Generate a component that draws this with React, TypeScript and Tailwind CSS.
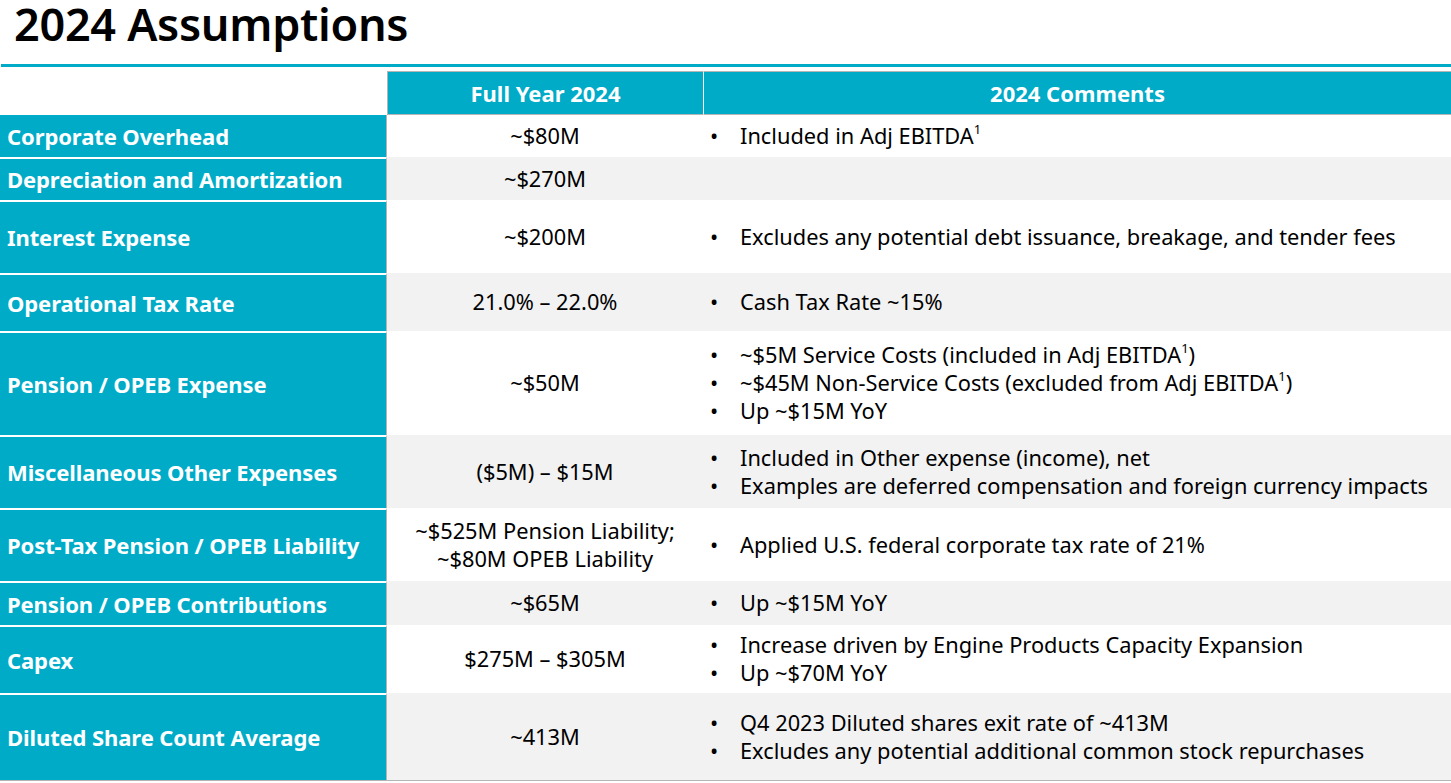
import React from "react";

type Row = {
  label: string;
  value: React.ReactNode;
  bullets: React.ReactNode[];
  h: string;
  gray: boolean;
};

const Sup = () => <sup className="text-[13px] relative top-[-2px] align-super leading-none">1</sup>;

const rows: Row[] = [
  { label: "Corporate Overhead", value: "~$80M", bullets: [<>Included in Adj EBITDA<Sup /></>], h: "h-[42px]", gray: false },
  { label: "Depreciation and Amortization", value: "~$270M", bullets: [], h: "h-[43px]", gray: true },
  { label: "Interest Expense", value: "~$200M", bullets: ["Excludes any potential debt issuance, breakage, and tender fees"], h: "h-[73px]", gray: false },
  { label: "Operational Tax Rate", value: "21.0% – 22.0%", bullets: ["Cash Tax Rate ~15%"], h: "h-[58px]", gray: true },
  {
    label: "Pension / OPEB Expense",
    value: "~$50M",
    bullets: [
      <>~$5M Service Costs (included in Adj EBITDA<Sup />)</>,
      <>~$45M Non-Service Costs (excluded from Adj EBITDA<Sup />)</>,
      "Up ~$15M YoY",
    ],
    h: "h-[104px]",
    gray: false,
  },
  {
    label: "Miscellaneous Other Expenses",
    value: "($5M) – $15M",
    bullets: ["Included in Other expense (income), net", "Examples are deferred compensation and foreign currency impacts"],
    h: "h-[73px]",
    gray: true,
  },
  {
    label: "Post-Tax Pension / OPEB Liability",
    value: (
      <>
        ~$525M Pension Liability;
        <br />
        ~$80M OPEB Liability
      </>
    ),
    bullets: ["Applied U.S. federal corporate tax rate of 21%"],
    h: "h-[73px]",
    gray: false,
  },
  { label: "Pension / OPEB Contributions", value: "~$65M", bullets: ["Up ~$15M YoY"], h: "h-[44px]", gray: true },
  {
    label: "Capex",
    value: "$275M – $305M",
    bullets: ["Increase driven by Engine Products Capacity Expansion", "Up ~$70M YoY"],
    h: "h-[68px]",
    gray: false,
  },
  {
    label: "Diluted Share Count Average",
    value: "~413M",
    bullets: ["Q4 2023 Diluted shares exit rate of ~413M", "Excludes any potential additional common stock repurchases"],
    h: "h-[88px]",
    gray: true,
  },
];

export default function App() {
  return (
    <div
      className="w-[1451px] h-[783px] bg-white text-black"
      style={{ fontFamily: '"Noto Sans", "Open Sans", sans-serif' }}
    >
      <div className="h-[64px] pl-[14px]">
        <h1 className="text-[45px] font-semibold leading-[47px] tracking-[-0.3px]">2024 Assumptions</h1>
      </div>
      <div className="ml-[1px] h-[3px] bg-[#00abc8]" />
      <div className="h-[4px]" />
      {/* header */}
      <div className="flex h-[44px]">
        <div className="w-[387px] shrink-0 bg-white" />
        <div className="w-[316px] shrink-0 bg-[#00abc8] border-t border-b border-l border-[#b5b5b5] flex items-center justify-center text-white font-bold text-[22px]">
          Full Year 2024
        </div>
        <div className="flex-1 bg-[#00abc8] border-t border-b border-l border-l-white border-[#b5b5b5] flex items-center justify-center text-white font-bold text-[22px]">
          2024 Comments
        </div>
      </div>
      {rows.map((r, i) => (
        <div key={i} className={`flex ${r.h} ${i === rows.length - 1 ? "border-b border-[#b5b5b5]" : ""}`}>
          <div
            className={`w-[387px] shrink-0 bg-[#00abc8] border-r border-[#b5b5b5] ${i > 0 ? "border-t-2 border-t-white" : ""} flex items-center pl-[7px] text-white font-bold text-[22px] tracking-[-0.1px]`}
          >
            {r.label}
          </div>
          <div
            className={`w-[316px] shrink-0 ${r.gray ? "bg-[#f2f2f2]" : "bg-white"} flex items-center justify-center text-center text-[21.8px] leading-[28px]`}
          >
            <div>{r.value}</div>
          </div>
          <div className={`flex-1 ${r.gray ? "bg-[#f2f2f2]" : "bg-white"} flex flex-col justify-center text-[21.8px] leading-[28px]`}>
            {r.bullets.map((b, j) => (
              <div key={j} className="flex">
                <span className="w-[37px] pl-[7px] shrink-0">•</span>
                <span>{b}</span>
              </div>
            ))}
          </div>
        </div>
      ))}
    </div>
  );
}
